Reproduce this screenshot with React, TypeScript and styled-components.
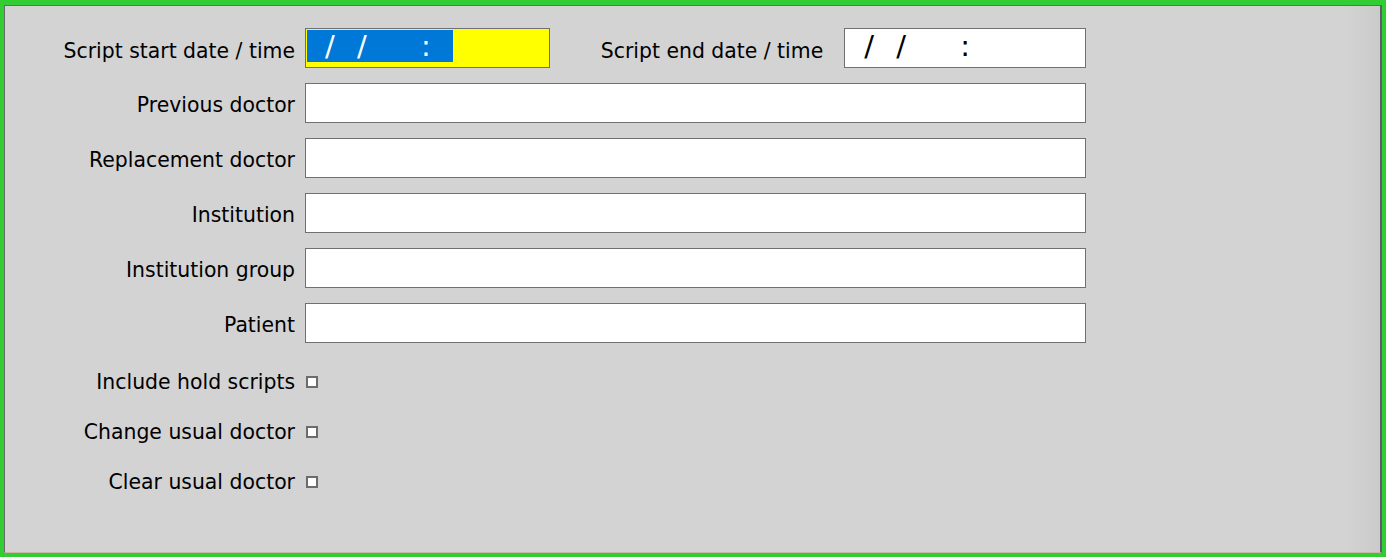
import React from "react";
import styled, { createGlobalStyle } from "styled-components";

const Global = createGlobalStyle`
  html, body { margin: 0; padding: 0; background: #32cd32; }
  * { box-sizing: border-box; }
`;

const Frame = styled.div`
  width: 1386px;
  height: 557px;
  border-style: solid;
  border-color: #32cd32;
  border-width: 5px 4px 4px 4px;
  display: flex;
`;

const Panel = styled.div`
  flex: 1;
  background: linear-gradient(to right, #d3d3d3 0, #d3d3d3 calc(100% - 36px), #cbcbcb 100%);
  border-top: 1px solid #6a6a6a;
  border-left: 1px solid #6a6a6a;
  border-right: 2px solid #5c5c6a;
  border-bottom: 1px solid #c9b8a8;
  padding-top: 22px;
  font-family: "DejaVu Sans", Tahoma, sans-serif;
  font-size: 20.4px;
  color: #000;
`;

const Fields = styled.div`
  display: grid;
  grid-template-columns: 290px 781px;
  column-gap: 10px;
  row-gap: 15px;
  align-items: center;
`;

const Label = styled.label<{ $low?: boolean }>`
  text-align: right;
  white-space: nowrap;
  padding-top: ${(p) => (p.$low ? 6 : 3)}px;
`;

const TextBox = styled.div<{ $width?: number; $bg?: string }>`
  width: ${(p) => (p.$width ? `${p.$width}px` : "100%")};
  height: 40px;
  background: ${(p) => p.$bg || "#fff"};
  border: 1px solid #707070;
  padding: 1px;
  display: flex;
  align-items: stretch;
`;

const DateRow = styled.div`
  display: flex;
  align-items: center;
`;

const EndLabel = styled.label`
  margin-left: 51px;
  margin-right: 21px;
  white-space: nowrap;
  padding-top: 6px;
`;

const Mask = styled.div<{ $selected?: boolean }>`
  display: flex;
  align-items: center;
  width: 146px;
  padding-left: 18px;
  background: ${(p) => (p.$selected ? "#0078d7" : "transparent")};
  color: ${(p) => (p.$selected ? "#fff" : "#000")};
  font-size: 29px;
  height: 32px;
  align-self: flex-start;
  overflow: hidden;
`;

const MaskChar = styled.span<{ $w: number }>`
  display: inline-block;
  width: ${(p) => p.$w}px;
  line-height: 32px;
`;

const Checks = styled.div`
  display: grid;
  grid-template-columns: 290px auto;
  column-gap: 11px;
  row-gap: 30px;
  margin-top: 29px;
  align-items: center;
`;

const CheckLabel = styled.label`
  text-align: right;
  white-space: nowrap;
  height: 20px;
  line-height: 20px;
`;

const CheckBox = styled.span`
  width: 12px;
  height: 12px;
  border: 2px solid #6b6b6b;
  background: #fff;
  display: block;
  margin-top: -1px;
`;

const DateMask: React.FC<{ selected?: boolean }> = ({ selected }) => (
  <Mask $selected={selected}>
    <MaskChar $w={32}>/</MaskChar>
    <MaskChar $w={64}>/</MaskChar>
    <MaskChar $w={10}>:</MaskChar>
  </Mask>
);

const fields = [
  "Previous doctor",
  "Replacement doctor",
  "Institution",
  "Institution group",
  "Patient",
];

const checks = ["Include hold scripts", "Change usual doctor", "Clear usual doctor"];

export default function App() {
  return (
    <>
      <Global />
      <Frame>
        <Panel>
          <Fields>
            <Label $low>Script start date / time</Label>
            <DateRow>
              <TextBox $width={245} $bg="#ffff00">
                <DateMask selected />
              </TextBox>
              <EndLabel>Script end date / time</EndLabel>
              <TextBox $width={242}>
                <DateMask />
              </TextBox>
            </DateRow>
            {fields.map((f) => (
              <React.Fragment key={f}>
                <Label>{f}</Label>
                <TextBox />
              </React.Fragment>
            ))}
          </Fields>
          <Checks>
            {checks.map((c) => (
              <React.Fragment key={c}>
                <CheckLabel>{c}</CheckLabel>
                <CheckBox />
              </React.Fragment>
            ))}
          </Checks>
        </Panel>
      </Frame>
    </>
  );
}
